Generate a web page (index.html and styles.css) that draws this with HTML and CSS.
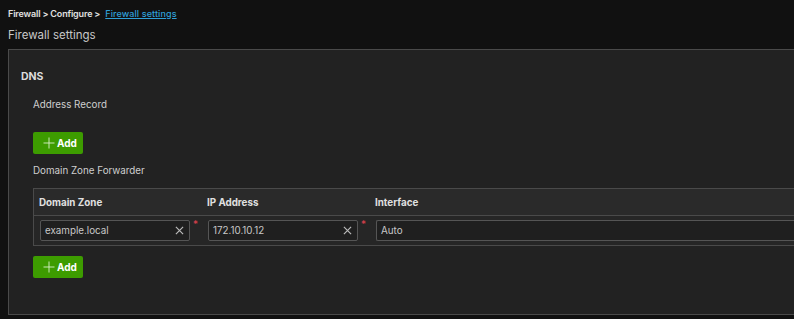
FILE: index.html
```html
<!DOCTYPE html>
<html>
<head>
<meta charset="utf-8">
<link rel="stylesheet" href="styles.css">
</head>
<body>
<div class="crumbs">
  <span>Firewall</span><span class="sep">&gt;</span><span>Configure</span><span class="sep">&gt;</span><a class="link" href="#">Firewall settings</a>
</div>
<h1 class="title">Firewall settings</h1>
<div class="panel">
  <div class="section-title">DNS</div>
  <div class="sub">
    <div class="label">Address Record</div>
    <button class="btn-add"><svg class="plus" viewBox="0 0 12 12" width="12" height="12"><path d="M6 0.5V11.5M0.5 6H11.5" stroke="#d8f0c8" stroke-width="0.9" fill="none"/></svg>Add</button>
    <div class="label label2">Domain Zone Forwarder</div>
    <div class="table">
      <div class="row head">
        <div class="cell">Domain Zone</div>
        <div class="cell">IP Address</div>
        <div class="cell">Interface</div>
      </div>
      <div class="row body">
        <div class="cell">
          <div class="input"><span>example.local</span><svg class="x" viewBox="0 0 10 10" width="9" height="9"><path d="M1 1L9 9M9 1L1 9" stroke="#bbb" stroke-width="1.3"/></svg></div>
          <span class="req">*</span>
        </div>
        <div class="cell">
          <div class="input"><span>172.10.10.12</span><svg class="x" viewBox="0 0 10 10" width="9" height="9"><path d="M1 1L9 9M9 1L1 9" stroke="#bbb" stroke-width="1.3"/></svg></div>
          <span class="req">*</span>
        </div>
        <div class="cell">
          <div class="input input-wide"><span>Auto</span></div>
        </div>
      </div>
    </div>
    <button class="btn-add"><svg class="plus" viewBox="0 0 12 12" width="12" height="12"><path d="M6 0.5V11.5M0.5 6H11.5" stroke="#d8f0c8" stroke-width="0.9" fill="none"/></svg>Add</button>
  </div>
</div>
</body>
</html>
```
FILE: styles.css
```css
html, body {
  margin: 0;
  padding: 0;
  background: #111111;
  overflow: hidden;
}
body {
  font-family: Inter, "Noto Sans", sans-serif;
  color: #d0d0d0;
  width: 794px;
  height: 319px;
}
.crumbs {
  padding: 7px 0 0 8px;
  height: 12px;
  font-size: 9px;
  font-weight: 600;
  color: #e0e0e0;
  display: flex;
  align-items: center;
  letter-spacing: -0.15px;
}
.sep {
  margin: 0 2px;
}
.link {
  color: #2f9fd8;
  text-decoration: underline;
  margin-left: 3px;
  font-weight: 500;
  letter-spacing: 0.1px;
}
.title {
  margin: 0;
  padding: 9px 0 0 8px;
  height: 21px;
  font-size: 11.5px;
  font-weight: 400;
  color: #c8c8c8;
}
.panel {
  margin-left: 8px;
  width: 786px;
  height: 266px;
  box-sizing: border-box;
  background: #222222;
  border: 1px solid #4a4a4a;
  border-right: none;
  padding: 20px 0 0 12px;
}
.section-title {
  font-size: 10.5px;
  font-weight: 700;
  color: #dcdcdc;
  height: 25px;
}
.sub {
  padding: 4px 0 0 12px;
}
.label {
  font-size: 9.8px;
  color: #cfcfcf;
  height: 33px;
}
.label2 {
  height: 23px;
  margin-top: 11px;
}
.btn-add {
  display: flex;
  align-items: center;
  gap: 2px;
  width: 50px;
  height: 22px;
  background: #3d9c00;
  border: none;
  border-radius: 2px;
  color: #ffffff;
  font-family: Inter, "Noto Sans", sans-serif;
  font-size: 10px;
  font-weight: 700;
  padding: 0 0 0 10px;
  margin: 0;
}
.plus {
  display: block;
}
.table {
  border: 1px solid #4a4a4a;
  border-right: none;
  margin-bottom: 10px;
}
.row {
  display: grid;
  grid-template-columns: 168px 168px 1fr;
}
.head {
  height: 26px;
  background: #2a2a2a;
  border-bottom: 1px solid #4a4a4a;
  align-items: center;
  font-size: 9.8px;
  font-weight: 700;
  color: #e0e0e0;
}
.body {
  height: 29px;
  align-items: center;
  background: #262626;
}
.cell {
  box-sizing: border-box;
  padding-left: 6px;
  display: flex;
  align-items: flex-start;
  min-width: 0;
}
.head .cell {
  padding-left: 5px;
}
.input {
  width: 150px;
  height: 21px;
  box-sizing: border-box;
  border: 1px solid #555555;
  border-radius: 2px;
  background: #1f1f1f;
  display: flex;
  align-items: center;
  justify-content: space-between;
  padding: 0 5px 0 4px;
  font-size: 9.8px;
  color: #c8c8c8;
}
.input-wide {
  width: 100%;
  border-right: none;
  border-radius: 2px 0 0 2px;
}
.req {
  color: #e0414f;
  font-size: 10px;
  margin-left: 3px;
  line-height: 9px;
}
.x {
  display: block;
}
```
